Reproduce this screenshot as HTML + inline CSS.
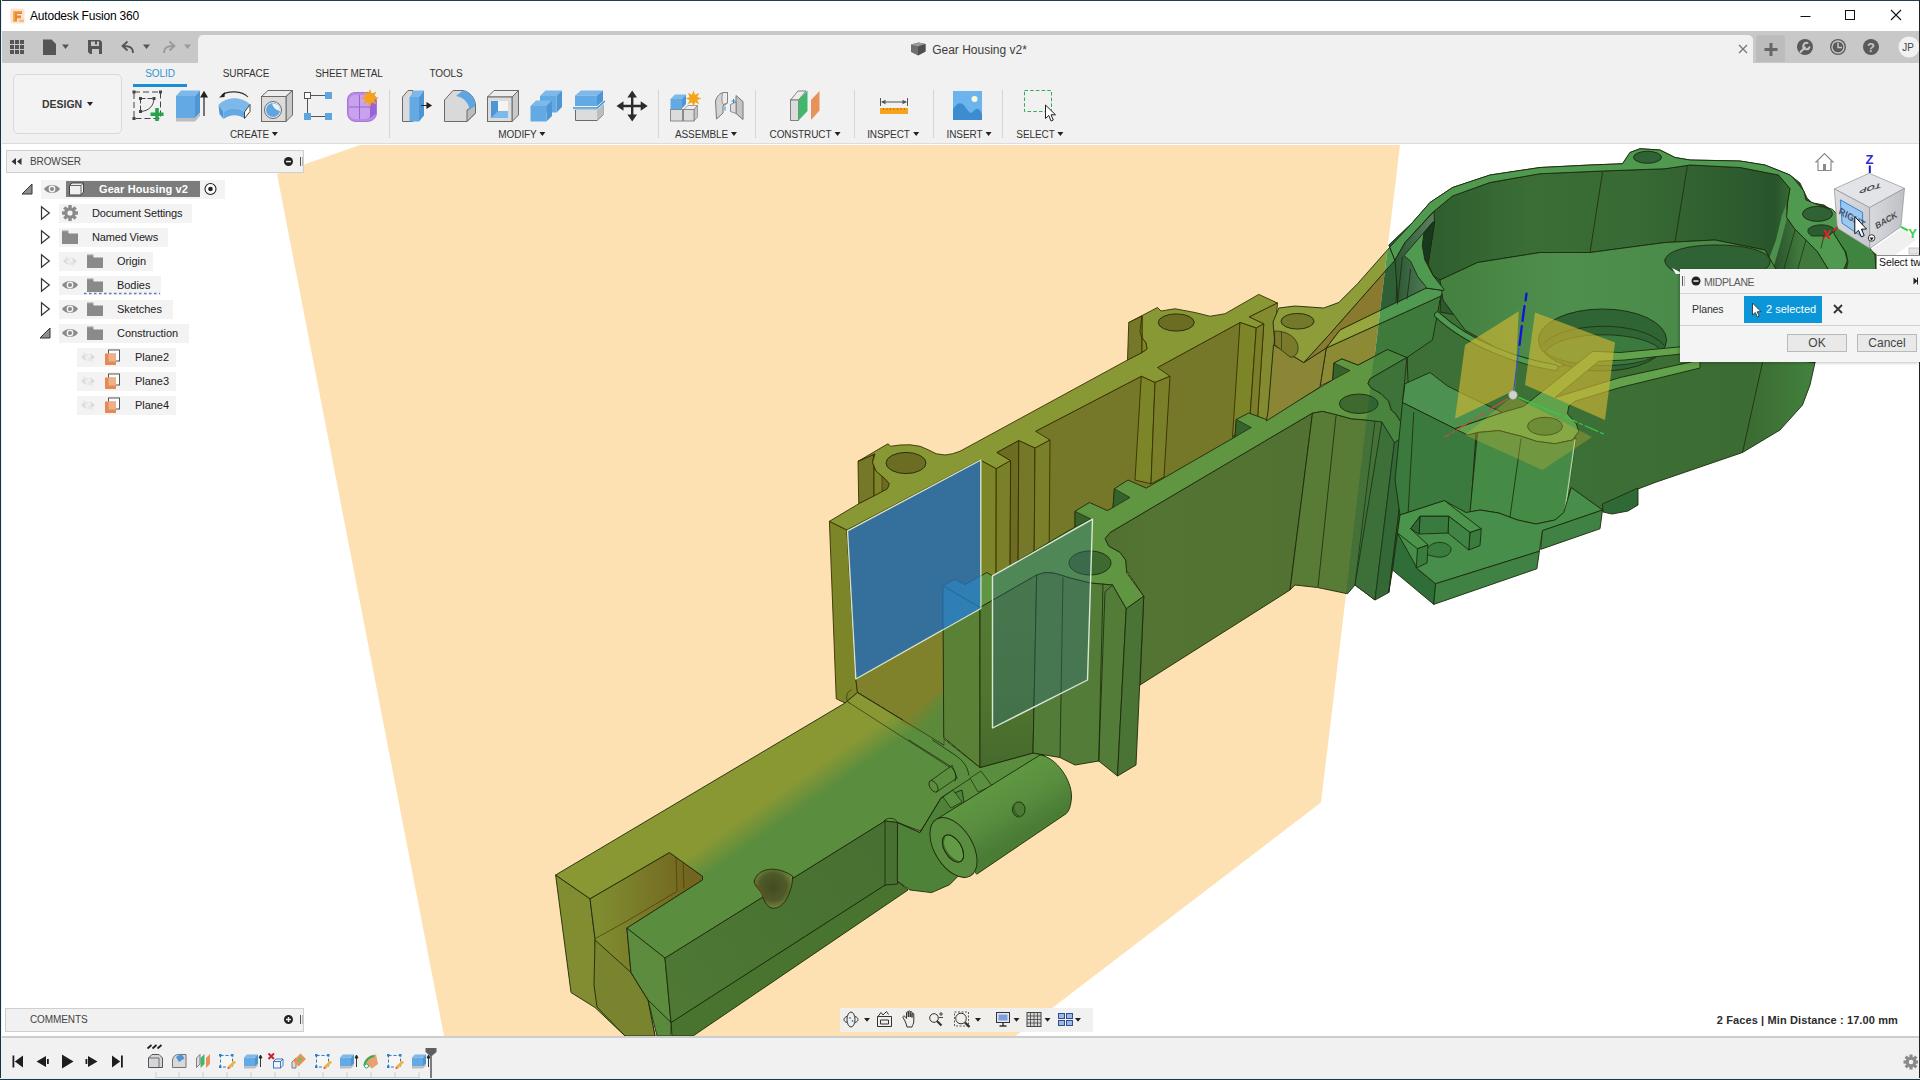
<!DOCTYPE html>
<html lang="en">
<head>
<meta charset="utf-8">
<title>Autodesk Fusion 360</title>
<style>
*{box-sizing:border-box;margin:0;padding:0}
html,body{width:1920px;height:1080px;overflow:hidden;background:#fff}
body{font-family:"Liberation Sans",sans-serif;font-size:11px;color:#333;position:relative}
.abs{position:absolute}
#app{position:absolute;left:0;top:0;width:1920px;height:1080px;overflow:hidden;background:#fff}
/* window frame */
#frameTop{left:0;top:0;width:1920px;height:1px;background:#1d3f4e}
#frameLeft{left:0;top:0;width:1px;height:1080px;background:#1b3340;box-shadow:1px 0 0 #e6f3f8}
#frameRight{left:1919px;top:0;width:1px;height:1080px;background:#222}
#frameBottom{left:0;top:1078.5px;width:1920px;height:1.5px;background:#1d3a46;box-shadow:0 -1px 0 #e3f1f6}
/* title bar */
#titlebar{left:2px;top:1px;width:1917px;height:30px;background:#fff}
#titlebar .t{left:28px;top:8px;font-size:12px;color:#000;white-space:nowrap;letter-spacing:-0.2px}
/* quick access bar */
#qat{left:2px;top:31px;width:1917px;height:31px;background:#c8c8c8}
#doctab{left:196px;top:4px;width:1555px;height:27px;background:#f1f1f1;border-radius:5px 5px 0 0}
#doctitle{left:4px;top:1px;width:1555px;height:27px;text-align:center;line-height:28px;font-size:12px;color:#3c3c3c}
#plusbtn{left:1754px;top:4px;width:29px;height:28px;background:#bcbcbc;border-radius:3px 3px 0 0}
/* toolbar */
#toolbar{left:2px;top:62px;width:1917px;height:82px;background:#f1f1f1;border-bottom:1px solid #dcdcdc}
#designbtn{left:11px;top:12px;width:109px;height:60px;border:1px solid #d9d9d9;border-radius:5px;background:#f3f3f3;text-align:center;line-height:58px;font-weight:bold;font-size:10.5px;color:#3a3a3a;letter-spacing:0}
.tab{top:6px;height:14px;font-size:10px;color:#333;white-space:nowrap;transform:translateX(-50%);letter-spacing:-0.1px}
.tab.on{color:#2d94d3}
#tabline{left:131px;top:22px;width:54px;height:3px;background:#1a8fd3}
.glabel{top:67px;font-size:10px;color:#333;white-space:nowrap;transform:translateX(-50%);letter-spacing:-0.1px}
.glabel:after{content:"";display:inline-block;margin-left:3px;border-left:3.5px solid transparent;border-right:3.5px solid transparent;border-top:4px solid #222;vertical-align:2px}
.sep{top:28px;width:1px;height:48px;background:#d6d6d6}
.ico{width:40px;height:40px}
/* viewport */
#viewport{left:2px;top:145px;width:1917px;height:891px;background:#fff;overflow:hidden}
#scene{position:absolute;left:-2px;top:-145px;width:1920px;height:1080px}
/* browser */
#browserHead{left:6px;top:150px;width:298px;height:23px;background:#f1f1f1;border:1px solid #cfcfcf}
.ptitle{left:23px;top:4px;font-size:11px;color:#444;letter-spacing:-0.1px}
.row{height:19px;background:#f3f3f3}
.rtxt{font-size:11px;color:#222;white-space:nowrap;line-height:14px;letter-spacing:-0.05px}
/* comments */
#commentsHead{left:5px;top:1008px;width:299px;height:24px;background:#f1f1f1;border:1px solid #cfcfcf}
/* nav bar */
#navbar{left:840px;top:1008px;width:253px;height:24px;background:rgba(240,240,240,.92)}
/* timeline */
#timeline{left:2px;top:1036px;width:1917px;height:42px;background:#f1f1f1;border-top:2px solid #cdcdcd}
/* midplane dialog */
#dlg{left:1680px;top:269px;width:240px;height:93px;z-index:5;background:#f4f4f4;box-shadow:-1px 1px 3px rgba(0,0,0,.25)}
#dlgHead{left:0;top:0;width:240px;height:25px;border-bottom:1px solid #d4d4d4}
#dlgSep{left:0;top:56px;width:240px;height:1px;background:#d0d0d0}
#selbtn{left:64px;top:27px;width:78px;height:26.5px;background:#0a96d8;color:#fff;font-size:11px;line-height:27px;white-space:nowrap}
.btn{top:65px;width:60px;height:18px;border:1px solid #b9b9b9;background:#e9e9e9;text-align:center;font-size:12px;line-height:16px;color:#444}
#tooltip{z-index:5;left:1876px;top:255px;width:50px;height:15px;background:#fff;border:1px solid #8a8a8a;font-size:10.5px;line-height:13px;color:#111;white-space:nowrap;padding-left:2px;overflow:hidden;letter-spacing:-0.1px}
#status{left:1600px;top:1013.5px;width:298px;font-size:11px;font-weight:bold;color:#2b2b2b;white-space:nowrap;letter-spacing:0.12px}
</style>
</head>
<body>
<div id="app">

<!-- ============ VIEWPORT ============ -->
<div id="viewport" class="abs">
<svg id="scene" width="1920" height="1080" viewBox="0 0 1920 1080">
<g id="p_plane">
<defs><clipPath id="cpIn"><polygon points="277,174 360,145 1400,145 1321,802.5 1015.5,1036 444,1036"/></clipPath><clipPath id="cpOut"><polygon points="1400,145 1920,145 1920,1036 1015.5,1036 1321,802.5"/></clipPath><linearGradient id="gFront" x1="0" y1="0" x2="1" y2="0"><stop offset="0" stop-color="#4f7031"/><stop offset="0.2" stop-color="#547433"/><stop offset="1" stop-color="#527233"/></linearGradient></defs>
<polygon points="277,174 360,145 1400,145 1321,802.5 1015.5,1036 444,1036" fill="#fde1b2"/>
</g>
<g id="p_backwall">
<polygon points="829.4,521.3 846.9,530 855.8,679 857.5,692.5 845,703 836.25,698.75" fill="#7d8529" stroke="#3a3000" stroke-width="0.9" stroke-linejoin="round"/>
<polygon points="846.9,530 980,460 980,620 943.75,640 943.75,745 857.5,692.5 855.8,679" fill="#80822b" stroke="#3a3000" stroke-width="0.9" stroke-linejoin="round"/>
<polygon points="980,459.4 1035.6,431.3 1141.3,376.3 1157.5,367.5 1240,322.5 1240,440 1200,470 1100,530 1000,585 980,600" fill="#747828" stroke="#3a3000" stroke-width="0.9" stroke-linejoin="round"/>
<polygon points="858,461.3 874,454.5 874,496 858.75,503.75" fill="#747828" stroke="#3a3000" stroke-width="0.9" stroke-linejoin="round"/>
<polygon points="874,454.5 872.5,462.5 876,471 885,478.75 889.4,483.75 887.5,488.75 874,496" fill="#7d8529" stroke="#3a3000" stroke-width="0.9" stroke-linejoin="round"/>
<polygon points="882,476 889.4,483.75 887.5,488.75 882,491.5" fill="#6c6c22" stroke="#3a3000" stroke-width="0.6" stroke-linejoin="round"/>
<polygon points="829.4,521.3 858.75,503.75 874,496 887.5,488.75 889.4,483.75 885,478.75 876,471 872.5,462.5 875,453.75 858,461.3 888,443.75 890.6,446.25 900,445 910,444.75 920,446.25 928.75,450 936.25,453.75 945,455 952.5,453.75 960,451.25 1127.5,360 1142,352.5 1147,349 1146,343 1141.5,337 1140,331 1142,325.5 1128.75,322.5 1157.5,307.5 1161,311 1175,308.75 1195,312.5 1210,316.25 1225,313.75 1258.75,294.4 1277.5,303 1249.4,316.9 1263.75,323.75 1256.25,328 1240,322.5 1157.5,367.5 1170,376.25 1155,382.5 1141.25,376.25 1035.6,431.25 1050,440 1035,448.1 1018.75,440.6 996.9,452.5 1010.6,460.6 996.25,468.75 980,460 846.9,530" fill="#879835" stroke="#3a3000" stroke-width="0.9" stroke-linejoin="round"/>
<polygon points="1128.75,322.5 1142,316 1142,352.5 1127.5,360" fill="#747828" stroke="#3a3000" stroke-width="0.9" stroke-linejoin="round"/>
<polygon points="1142,316 1140,331 1141.5,337 1146,343 1147,349 1142,352.5" fill="#7d8529" stroke="#3a3000" stroke-width="0.9" stroke-linejoin="round"/>
<ellipse cx="906" cy="463" rx="20" ry="10.6" fill="#6c6c22" stroke="#1d2a0c" stroke-width="0.9"/>
<path d="M887 466 C892 458 918 455 925.500 461" fill="none" stroke="#8a8f3a" stroke-width="0" stroke-linejoin="round" stroke-linecap="round"/>
<ellipse cx="1176.25" cy="322.5" rx="18" ry="8.6" fill="#6c6c22" stroke="#1d2a0c" stroke-width="0.9"/>
<polygon points="980,460 996.25,468.75 996,600 980.8,608" fill="#7d8529" stroke="#3a3000" stroke-width="0.9" stroke-linejoin="round"/>
<polygon points="996.25,468.75 1010.6,460.6 1010,590 996,600" fill="#7a8029" stroke="#3a3000" stroke-width="0.9" stroke-linejoin="round"/>
<polygon points="1010.6,460.6 996.9,452.5 1018.75,440.6 1018,585 1010,590" fill="#6c6c22" stroke="#3a3000" stroke-width="0.9" stroke-linejoin="round"/>
<polygon points="1018.75,440.6 1035,448.1 1034,575 1018,585" fill="#747828" stroke="#3a3000" stroke-width="0.9" stroke-linejoin="round"/>
<polygon points="1035,448.1 1050,440 1049,567 1034,575" fill="#7a8029" stroke="#3a3000" stroke-width="0.9" stroke-linejoin="round"/>
<polygon points="1141.25,376.25 1155,382.5 1151,483.75 1135,480" fill="#7d8529" stroke="#3a3000" stroke-width="0.9" stroke-linejoin="round"/>
<polygon points="1155,382.5 1170,376.25 1164,477 1151,483.75" fill="#7a8029" stroke="#3a3000" stroke-width="0.9" stroke-linejoin="round"/>
<polygon points="1249.4,316.9 1277.5,303 1267.5,423 1257.5,419 1263.75,323.75" fill="#838b30" stroke="#3a3000" stroke-width="0.9" stroke-linejoin="round"/>
<polygon points="1240,322.5 1256.25,328 1250,417 1232.5,437.5" fill="#7d8529" stroke="#3a3000" stroke-width="0.9" stroke-linejoin="round"/>
<polygon points="1256.25,328 1263.75,323.75 1257.5,419 1250,417" fill="#7a8029" stroke="#3a3000" stroke-width="0.9" stroke-linejoin="round"/>
</g>
<g id="p_arm">
<defs><linearGradient id="gFloor" gradientUnits="userSpaceOnUse" x1="811" y1="770" x2="826" y2="791.500"><stop offset="0" stop-color="#8a9834"/><stop offset="1" stop-color="#5b8d3e"/></linearGradient><linearGradient id="gPocket" gradientUnits="userSpaceOnUse" x1="600" y1="900" x2="690" y2="900"><stop offset="0" stop-color="#7f8c30"/><stop offset="1" stop-color="#73651f"/></linearGradient><linearGradient id="gArmFront" gradientUnits="userSpaceOnUse" x1="670" y1="1000" x2="885" y2="850"><stop offset="0" stop-color="#4e7834"/><stop offset="1" stop-color="#477032"/></linearGradient></defs>
<polygon points="671,1022.5 885,885 897,881 908,890 693,1036 672,1036" fill="#48742f" stroke="#1d2a0c" stroke-width="0.9" stroke-linejoin="round"/>
<path d="M605 1036 C602 1020 597 1010 595 1007" fill="none" stroke="#1d2a0c" stroke-width="0" stroke-linejoin="round" stroke-linecap="round"/>
<polygon points="555.6,875 590,898.75 595,938.75 627,930 631,972.5 648,1000 655,1036 625,1036 595,1007.5 571,992.5" fill="#828c31" stroke="#1d2a0c" stroke-width="0.9" stroke-linejoin="round"/>
<polygon points="590,898.75 669.4,852.5 702.5,876.25 702.5,880 626.9,928.1 631,972.5 597,990 595,938.75" fill="url(#gPocket)" stroke="#1d2a0c" stroke-width="0.9" stroke-linejoin="round"/>
<path d="M595 938.750 L627 921 L676 892 M676 855 L677 891 M683 859 L684 888" fill="none" stroke="#4a3a05" stroke-width="0.7" stroke-linejoin="round" stroke-linecap="round"/>
<polygon points="595,940 631,972.5 648,1000 655,1036 625,1036 597,1007 594,985" fill="#7a842e" stroke="#1d2a0c" stroke-width="0.9" stroke-linejoin="round"/>
<polygon points="631,972.5 648,1000 657,1036 671,1036 671,1022.5" fill="#5a8a3c" stroke="#1d2a0c" stroke-width="0.9" stroke-linejoin="round"/>
<polygon points="555.6,875 845,703 857.5,692.5 943.75,745 943.75,738.75 980,767.5 1033,753 1045,755 960,805 930,820 920,831 897.5,822.5 885,821 665,958.1 626.9,928.1 702.5,880 702.5,876.25 669.4,852.5 590,898.75" fill="url(#gFloor)" stroke="#1d2a0c" stroke-width="0.9" stroke-linejoin="round"/>
<defs><linearGradient id="gWallG" gradientUnits="userSpaceOnUse" x1="915" y1="708" x2="930" y2="722"><stop offset="0" stop-color="#80822b"/><stop offset="1" stop-color="#5b8a3a"/></linearGradient></defs>
<polygon points="900,722 943.75,690 943.75,745" fill="url(#gWallG)"/>
<path d="M857.500 692.500 L943.750 745 M848.750 702.500 L950 767.500" fill="none" stroke="#2a3410" stroke-width="0.7" stroke-linejoin="round" stroke-linecap="round"/>
<path d="M851 690 C846 692 845 700 849 703" fill="none" stroke="#2a3410" stroke-width="0.7" stroke-linejoin="round" stroke-linecap="round"/>
<polygon points="626.9,928.1 665,958.1 671,1022.5 648,1000 631,972.5" fill="#5d8c3e" stroke="#1d2a0c" stroke-width="0.9" stroke-linejoin="round"/>
<polygon points="665,958.1 885,821 897.5,822.5 897.5,884 885,885 671,1022.5" fill="url(#gArmFront)" stroke="#1d2a0c" stroke-width="0.9" stroke-linejoin="round"/>
<path d="M885 821 L885 885" fill="none" stroke="#1d2a0c" stroke-width="0.8" stroke-linejoin="round" stroke-linecap="round"/>
<defs><radialGradient id="gTear" gradientUnits="userSpaceOnUse" cx="773" cy="887" r="21"><stop offset="0" stop-color="#434b21"/><stop offset="0.65" stop-color="#4f5a28"/><stop offset="1" stop-color="#76843d"/></radialGradient></defs>
<path d="M754.400 881 C756 873 764 869.500 771 869.200 C778 869 786 871.500 792.500 876.100 C793 884 790 893 786 900 C782 906 777 908.500 773 908.300 C768 907.500 764.500 903 763 897 C762 892 758 889 756 886 C754.500 884 754 882.500 754.400 881 Z" fill="url(#gTear)" stroke="#1d2a0c" stroke-width="0.9" stroke-linejoin="round" stroke-linecap="round"/>
<path d="M755.500 884 C758 888 762.500 891 763.500 897" fill="none" stroke="#7a4a1a" stroke-width="1.3" stroke-linejoin="round" stroke-linecap="round"/>
<defs><linearGradient id="gCyl" gradientUnits="userSpaceOnUse" x1="985" y1="775" x2="1020" y2="835"><stop offset="0" stop-color="#74ab52"/><stop offset="0.12" stop-color="#609842"/><stop offset="0.6" stop-color="#588d3e"/><stop offset="1" stop-color="#4a7c36"/></linearGradient></defs>
<polygon points="897.5,822.5 920,832.5 941,798 962,790 975,870 958.7,875.6 949.6,884.7 931.6,892.6 910,890 897.3,881" fill="#4f8239" stroke="#1d2a0c" stroke-width="0.9" stroke-linejoin="round"/>
<path d="M897.500 822.500 L920 832.500 L941.250 797.500 L970 778.750" fill="none" stroke="#1d2a0c" stroke-width="0.8" stroke-linejoin="round" stroke-linecap="round"/>
<path d="M884 821 C886 817 896 817 897.500 822.500" fill="none" stroke="#1d2a0c" stroke-width="0.8" stroke-linejoin="round" stroke-linecap="round"/>
<path d="M908.750 740 L950 766 C955 770 957 775 955 781 M932.500 740 L955 755 C964 761 968 768 968.750 775" fill="none" stroke="#1d2a0c" stroke-width="0.8" stroke-linejoin="round" stroke-linecap="round"/>
<path d="M931 780.500 L952 765.500 M936.500 792 L957 778 M957 778 C955 772 953 768 952 765.500" fill="none" stroke="#1d2a0c" stroke-width="0.8" stroke-linejoin="round" stroke-linecap="round"/>
<ellipse cx="933.5" cy="786.3" rx="3.6" ry="6.4" fill="none" stroke="#1d2a0c" stroke-width="0.8" transform="rotate(-32 933.5 786.3)"/>
<polygon points="943,797 953,790 962,802 951,808" fill="#5a8f40" stroke="#1d2a0c" stroke-width="0.7" stroke-linejoin="round"/>
<polygon points="970,778 981,771 992,786 978,792" fill="#5a8f40" stroke="#1d2a0c" stroke-width="0.7" stroke-linejoin="round"/>
<path d="M937.500 818.750 L1040 755 C1056 757 1072 780 1071.500 797 C1071 806 1069 811 1066 813.750 L977 874 Z" fill="url(#gCyl)" stroke="#1d2a0c" stroke-width="0.9" stroke-linejoin="round" stroke-linecap="round"/>
<ellipse cx="953.5" cy="847.5" rx="33" ry="19" fill="#5a8d3f" stroke="#1d2a0c" stroke-width="0.9" transform="rotate(59 953.5 847.5)"/>
<ellipse cx="953" cy="848.5" rx="15" ry="8.5" fill="#629a46" stroke="#1d2a0c" stroke-width="0.9" transform="rotate(59 953 848.5)"/>
<path d="M944 838 C940 845 948 858 958 862" fill="none" stroke="#3f6a2f" stroke-width="2.2" stroke-linejoin="round" stroke-linecap="round"/>
<ellipse cx="953" cy="848.5" rx="15" ry="8.5" fill="none" stroke="#1d2a0c" stroke-width="0.9" transform="rotate(59 953 848.5)"/>
<ellipse cx="1018.75" cy="809.4" rx="6.3" ry="7.5" fill="#4a7a35" stroke="#1d2a0c" stroke-width="0.9"/>
<path d="M1014 806 C1013 811 1016 815 1020 816.500" fill="none" stroke="#355e2a" stroke-width="1.6" stroke-linejoin="round" stroke-linecap="round"/>
</g>
<g id="p_front">
<polygon points="1110,532.5 1312.5,413 1290,590 1140,685 1143.75,596.25 1126,570 1125.6,560 1120,552.5 1108.75,546.25 1105,538.75" fill="url(#gFront)" stroke="#1d2a0c" stroke-width="0.9" stroke-linejoin="round"/>
<polygon points="1312.5,413 1322.5,411.25 1337.5,415 1351.25,418.75 1366.25,420 1381.9,421.9 1375,600 1355,585 1347.5,593.75 1317.5,587.5 1295,585 1290,590" fill="#587c36" stroke="#1d2a0c" stroke-width="0.9" stroke-linejoin="round"/>
<path d="M1336 416 L1318 587 M1375 421 L1355 585" fill="none" stroke="#1d2a0c" stroke-width="0.8" stroke-linejoin="round" stroke-linecap="round"/>
<polygon points="1381.9,421.9 1394.4,442.5 1375,600 1355,585" fill="#4f7a38" stroke="#1d2a0c" stroke-width="0.9" stroke-linejoin="round"/>
<polygon points="1394.4,442.5 1408.75,433.75 1388.75,592.5 1375,600" fill="#456f35" stroke="#1d2a0c" stroke-width="0.9" stroke-linejoin="round"/>
<polygon points="943.3,587.5 953.3,580.8 965,585 986.7,572.5 992.5,575.8 1075,527 1075,511.25 1089.4,502.5 1107.5,510.6 1113,507.5 1114.4,488.75 1128,480 1146.25,488.1 1235,437 1236.25,419.4 1248.75,413 1266.25,419.4 1332.5,380 1333.75,363 1341.9,358.75 1358,365 1387.5,349.4 1406.9,357.5 1370,378.75 1368,383.75 1371.25,388 1381.25,393.75 1388.75,401.25 1391.25,410 1395,413 1408.75,433.75 1394.4,442.5 1381.9,421.9 1366.25,420 1351.25,418.75 1337.5,415 1322.5,411.25 1312.5,413 1110,532.5 1105,538.75 1108.75,546.25 1120,552.5 1125.6,560 1126.7,573 1143.75,596.25 1126.25,608.75 1112.5,585 1090,583 1070,578 1055,573.3 1045,572.5 1036.7,575 980,607.5" fill="#609641" stroke="#1d2a0c" stroke-width="0.9" stroke-linejoin="round"/>
<polygon points="1075,511.25 1091,519 1075,527" fill="#36622c" stroke="#1d2a0c" stroke-width="0.7" stroke-linejoin="round"/>
<polygon points="1114.4,488.75 1130,497.5 1113,507.5" fill="#36622c" stroke="#1d2a0c" stroke-width="0.7" stroke-linejoin="round"/>
<polygon points="1236.25,419.4 1251.25,427.5 1235,437" fill="#36622c" stroke="#1d2a0c" stroke-width="0.7" stroke-linejoin="round"/>
<polygon points="1333.75,363 1350,370.6 1332.5,380" fill="#36622c" stroke="#1d2a0c" stroke-width="0.7" stroke-linejoin="round"/>
<ellipse cx="1090" cy="563" rx="21" ry="12" fill="#3f6a2f" stroke="#1d2a0c" stroke-width="0.9"/>
<ellipse cx="1358.75" cy="403.75" rx="19.4" ry="9.7" fill="#3f6a2f" stroke="#1d2a0c" stroke-width="0.9"/>
<polygon points="942.9,585.8 980,607.5 980,767.5 943.75,737.5" fill="#5a8236" stroke="#1d2a0c" stroke-width="0.9" stroke-linejoin="round"/>
<defs><linearGradient id="gFaceB" x1="0" y1="0" x2="0" y2="1"><stop offset="0" stop-color="#557c36"/><stop offset="0.6" stop-color="#50762f"/><stop offset="1" stop-color="#466a2d"/></linearGradient></defs>
<polygon points="980,607.5 1036.7,575 1033,753 980,767.5" fill="url(#gFaceB)" stroke="#1d2a0c" stroke-width="0.9" stroke-linejoin="round"/>
<polygon points="1036.7,575 1045,572.5 1055,573.3 1070,578 1090,583 1112.5,585 1126.25,608.75 1117.5,776 1098.75,761 1075,765 1060,757.5 1045,755 1033,753" fill="#527c38" stroke="#1d2a0c" stroke-width="0.9" stroke-linejoin="round"/>
<path d="M1063 578 L1060 757 M1103 584.500 L1098.750 761" fill="none" stroke="#1d2a0c" stroke-width="0.8" stroke-linejoin="round" stroke-linecap="round"/>
<polygon points="1126.25,608.75 1143.75,596.25 1136,765 1117.5,776" fill="#4a7435" stroke="#1d2a0c" stroke-width="0.9" stroke-linejoin="round"/>
<path d="M1112.500 585 L1105 592 L1098.750 761" fill="none" stroke="#1d2a0c" stroke-width="0.8" stroke-linejoin="round" stroke-linecap="round"/>
<polygon points="1374,356.5 1387.5,349.4 1406.9,357.5 1408.75,433.75 1388.75,592.5 1375,600 1355,585 1347.5,593.75 1346,594" fill="rgba(15,85,60,0.28)"/>
</g>
<g id="p_housing">
<defs><linearGradient id="gInner" gradientUnits="userSpaceOnUse" x1="1440" y1="0" x2="1800" y2="0"><stop offset="0" stop-color="#2f5f2f"/><stop offset="0.25" stop-color="#3a6e36"/><stop offset="0.55" stop-color="#376a34"/><stop offset="0.85" stop-color="#2c5a2e"/><stop offset="0.93" stop-color="#28542b"/><stop offset="1" stop-color="#3f7a3c"/></linearGradient><linearGradient id="gExt" gradientUnits="userSpaceOnUse" x1="1560" y1="0" x2="1815" y2="0"><stop offset="0" stop-color="#3d7036"/><stop offset="0.75" stop-color="#3b6c33"/><stop offset="1" stop-color="#43823e"/></linearGradient><linearGradient id="gFloorH" gradientUnits="userSpaceOnUse" x1="1440" y1="0" x2="1760" y2="0"><stop offset="0" stop-color="#44803f"/><stop offset="0.4" stop-color="#4f8f4d"/><stop offset="1" stop-color="#488848"/></linearGradient></defs>
<polygon points="1326.25,348 1441,296 1437.5,317.5 1432.5,365 1406.9,357.5 1387.5,349.4 1358,365 1341.9,358.75 1333.75,363 1332.5,380 1320,386" fill="#8c8a34" clip-path="url(#cpIn)"/>
<polygon points="1326.25,348 1441,296 1437.5,317.5 1432.5,365 1406.9,357.5 1387.5,349.4 1358,365 1341.9,358.75 1333.75,363 1332.5,380 1320,386" fill="#3d7a3c" clip-path="url(#cpOut)"/>
<polygon points="1326.25,348 1441,296 1437.5,317.5 1432.5,365 1406.9,357.5 1387.5,349.4 1358,365 1341.9,358.75 1333.75,363 1332.5,380 1320,386" fill="none" stroke="#1d2a0c" stroke-width="0.9" stroke-linejoin="round"/>
<polygon points="1273.5,345 1303.75,362.5 1326.25,348 1320,387 1266.25,421 1268,412" fill="#8a8636" stroke="#1d2a0c" stroke-width="0.9" stroke-linejoin="round"/>
<polygon points="1303.75,362.5 1330,333.75 1395,260 1403,256 1398,302 1340,330 1326.25,348" fill="#8a7a30" clip-path="url(#cpIn)"/>
<polygon points="1303.75,362.5 1330,333.75 1395,260 1403,256 1398,302 1340,330 1326.25,348" fill="#2f5f35" clip-path="url(#cpOut)"/>
<polygon points="1303.75,362.5 1330,333.75 1395,260 1403,256 1398,302 1340,330 1326.25,348" fill="none" stroke="#1d2a0c" stroke-width="0.9" stroke-linejoin="round"/>
<path d="M1398 257 L1396 303 M1408 258 L1405 298" fill="none" stroke="#1d2a0c" stroke-width="0.8" stroke-linejoin="round" stroke-linecap="round"/>
<polygon points="1278.75,308 1295,306 1323.75,308 1338.75,302.5 1357.5,283.75 1390,247 1412.5,222.5 1420,230 1395,260 1330,333.75 1303.75,362.5 1275,345 1273,322" fill="#8e9c3a" clip-path="url(#cpIn)"/>
<polygon points="1278.75,308 1295,306 1323.75,308 1338.75,302.5 1357.5,283.75 1390,247 1412.5,222.5 1420,230 1395,260 1330,333.75 1303.75,362.5 1275,345 1273,322" fill="#4f9a50" clip-path="url(#cpOut)"/>
<polygon points="1278.75,308 1295,306 1323.75,308 1338.75,302.5 1357.5,283.75 1390,247 1412.5,222.5 1420,230 1395,260 1330,333.75 1303.75,362.5 1275,345 1273,322" fill="none" stroke="#1d2a0c" stroke-width="0.9" stroke-linejoin="round"/>
<ellipse cx="1297.5" cy="321.25" rx="16.5" ry="7.8" fill="#73782a" stroke="#1d2a0c" stroke-width="0.9"/>
<path d="M1275 331 C1290 331 1299 340 1298 350 C1297 356 1292 358 1290 357 L1275 345 Z" fill="#7b7a2c" stroke="#1d2a0c" stroke-width="0.7" stroke-linejoin="round" stroke-linecap="round"/>
<path d="M1281.500 332 L1281.500 349" fill="none" stroke="#1d2a0c" stroke-width="0.6" stroke-linejoin="round" stroke-linecap="round"/>
<polygon points="1340,330 1426,288 1443.75,290.5 1441,296 1326.25,348" fill="#98a640" clip-path="url(#cpIn)"/>
<polygon points="1340,330 1426,288 1443.75,290.5 1441,296 1326.25,348" fill="#4f9a50" clip-path="url(#cpOut)"/>
<polygon points="1340,330 1426,288 1443.75,290.5 1441,296 1326.25,348" fill="none" stroke="#1d2a0c" stroke-width="0.9" stroke-linejoin="round"/>
<polygon points="1406.9,357.5 1432.5,340 1440,300 1560,330 1700,340 1815,362.5 1810,385 1802.5,405 1780,430 1742.5,452.5 1655,482.5 1638,489 1605,505 1602.5,510 1571,488 1560,520 1400,515 1392.5,570 1388.75,592.5 1408.75,433.75" fill="url(#gExt)" stroke="#1d2a0c" stroke-width="0.9" stroke-linejoin="round"/>
<path d="M1762.500 362.500 L1742.500 452.500" fill="none" stroke="#1d2a0c" stroke-width="0.8" stroke-linejoin="round" stroke-linecap="round"/>
<polygon points="1406.9,357.5 1370,378.75 1368,383.75 1371.25,388 1381.25,393.75 1388.75,401.25 1391.25,410 1395,413 1408.75,433.75 1409,400" fill="#3d7239" stroke="#1d2a0c" stroke-width="0.9" stroke-linejoin="round"/>
<path d="M1406.900 357.500 L1402.500 402.500" fill="none" stroke="#1d2a0c" stroke-width="0.8" stroke-linejoin="round" stroke-linecap="round"/>
<polygon points="1395,260 1388.75,245 1412.5,222.5 1430,202.5 1452.5,187.5 1490,175 1540,167.5 1590,165 1622.5,163.75 1630,152.5 1640,148.75 1660,150 1675,157.5 1690,160 1740,161 1765,165 1790,175 1800,183 1807,198 1812,202.8 1824,205 1835,212.4 1837.3,222 1877,255 1880,272 1815,272 1815,362.5 1700,345 1560,335 1440,312 1441,296 1443.75,291" fill="#2c5a2e" stroke="#1d2a0c" stroke-width="0.9" stroke-linejoin="round"/>
<polygon points="1432.5,212.5 1452.5,196 1490,182.5 1540,173.75 1602.5,171 1665,168.75 1690,165 1740,167.5 1778.5,175 1790,188.6 1787.7,202.4 1786.6,217.3 1794.6,228.75 1806,240 1817.5,251.7 1830,272 1777.5,272 1765,250 1715,240 1665,242.5 1590,252.5 1540,252.5 1477.5,262.5 1440,280 1433,275.4 1428,264 1434.5,222" fill="url(#gInner)" stroke="#1d2a0c" stroke-width="0.9" stroke-linejoin="round"/>
<path d="M1602.500 172.500 L1590 252.500 M1687.500 165 L1675 242.500" fill="none" stroke="#1d2a0c" stroke-width="0.8" stroke-linejoin="round" stroke-linecap="round"/>
<polygon points="1786,205 1787,218 1780,245 1772,272 1764,272 1776,240 1782,215" fill="#4f8f4e"/>
<path d="M1795 230 L1783 272 M1806 240 L1797 272" fill="none" stroke="#1d2a0c" stroke-width="0.7" stroke-linejoin="round" stroke-linecap="round"/>
<polygon points="1838.7,224 1870,248 1875,255 1876,272 1842.7,272 1847.3,260.8 1845,251.7 1833.5,233" fill="#3f8540" stroke="#1d2a0c" stroke-width="0.9" stroke-linejoin="round"/>
<polygon points="1835,236 1846,252 1848,262 1846,272 1838,272 1840,258 1832,240" fill="#28552c" stroke="#1d2a0c" stroke-width="0.7" stroke-linejoin="round"/>
<path d="M1390 247 L1412.500 222.500 L1430 202.500 L1452.500 187.500 L1490 175 L1540 167.500 L1590 165 L1622.500 163.750 L1630 152.500 L1640 148.750 L1660 150 L1675 157.500 L1690 160 L1740 161 L1765 165 L1790 175 L1794.600 179.500 L1803.750 191 L1806 200 L1817.500 204.700 L1832.400 209.300 L1838 215 L1838.700 224 L1833.500 233 L1845 251.700 L1847.300 260.800 L1842.700 272 L1830 272 L1817.500 251.700 L1806 240 L1794.600 228.750 L1786.600 217.300 L1787.700 202.400 L1790 188.600 L1778.500 175 L1740 167.500 L1690 165 L1665 168.750 L1602.500 171 L1540 173.750 L1490 182.500 L1452.500 196 L1432.500 212.500 L1405 242.500 L1395 260 Z" fill="#4f9a50" stroke="#1d2a0c" stroke-width="0.9" stroke-linejoin="round" stroke-linecap="round"/>
<ellipse cx="1647.5" cy="157.3" rx="14" ry="6" fill="#2f6234" stroke="#1d2a0c" stroke-width="0.9"/>
<ellipse cx="1817.5" cy="213.9" rx="15" ry="7.5" fill="#2f6234" stroke="#1d2a0c" stroke-width="0.9"/>
<path d="M1808.500 229 C1812 224 1828 223 1833.500 228.500 C1834 232 1831 234.500 1828 236 L1812 236 C1808 234 1807 231 1808.500 229 Z" fill="#2c5d30" stroke="#1d2a0c" stroke-width="0.8" stroke-linejoin="round" stroke-linecap="round"/>
<path d="M1824 236 L1821 248" fill="none" stroke="#1d2a0c" stroke-width="0.7" stroke-linejoin="round" stroke-linecap="round"/>
<polygon points="1440,280 1477.5,262.5 1540,252.5 1590,252.5 1665,242.5 1715,240 1765,250 1777.5,272 1815,300 1815,362.5 1700,352 1620,352 1555,367.5 1500,350 1465,330 1443,300" fill="url(#gFloorH)" stroke="#1d2a0c" stroke-width="0.9" stroke-linejoin="round"/>
<path d="M1665 260 C1667 250 1690 245 1717 245 C1745 245 1768 251 1770 260 C1771 266 1765 271 1755 274 L1680 274 C1670 270 1664 265 1665 260 Z" fill="#2f6234" stroke="#1d2a0c" stroke-width="0.9" stroke-linejoin="round" stroke-linecap="round"/>
<path d="M1672 268 L1684 274 L1676 274 Z" fill="#fff"/>
<ellipse cx="1602.5" cy="340" rx="64" ry="31" fill="#2f6535" stroke="#1d2a0c" stroke-width="0.9"/>
<path d="M1542 345 C1560 322 1640 318 1664 345 M1552 352 C1572 334 1632 332 1652 354" fill="none" stroke="#1d2a0c" stroke-width="0.8" stroke-linejoin="round" stroke-linecap="round"/>
<path d="M1545 352 C1560 368 1640 372 1662 352 C1650 330 1560 328 1545 352 Z" fill="#3b7a3f" stroke="#1d2a0c" stroke-width="0.8" stroke-linejoin="round" stroke-linecap="round"/>
<defs><linearGradient id="gPock" gradientUnits="userSpaceOnUse" x1="1398" y1="0" x2="1428" y2="0"><stop offset="0" stop-color="#2f5a36"/><stop offset="0.5" stop-color="#3f6b48"/><stop offset="1" stop-color="#567a5c"/></linearGradient></defs>
<polygon points="1395,260 1405,242.5 1434,211.5 1434.5,222 1428,264 1433,275.4 1443.75,290 1426,288 1398,302" fill="url(#gPock)" stroke="#1d2a0c" stroke-width="0.9" stroke-linejoin="round"/>
<path d="M1402.400 257 L1397.300 304 M1410.600 269.300 L1407 298.900" fill="none" stroke="#1d2a0c" stroke-width="0.8" stroke-linejoin="round" stroke-linecap="round"/>
<polygon points="1433,221.9 1423.8,233.6 1422.3,245.9 1424.9,260.1 1428,264 1434.5,222" fill="#173a1f" stroke="#1d2a0c" stroke-width="0.7" stroke-linejoin="round"/>
<polygon points="1433,221.9 1404,255.6 1410.6,261.2 1417.7,276.5 1425.9,286.6 1426,288 1443.75,290.5 1444.2,289.7 1433,275.4 1424.9,260.1 1422.3,245.9 1423.8,233.6" fill="#4f9a50" stroke="#1d2a0c" stroke-width="0.9" stroke-linejoin="round"/>
<path d="M1437.500 315 C1470 345 1520 362 1555 367.500" fill="none" stroke="#16300f" stroke-width="6.6" stroke-linejoin="round" stroke-linecap="round"/>
<path d="M1437.500 315 C1470 345 1520 362 1555 367.500" fill="none" stroke="#4f9a50" stroke-width="5" stroke-linejoin="round" stroke-linecap="round"/>
<polygon points="1405,383.75 1430,372.5 1447.5,386 1467.5,396 1502.5,412.5 1455,428.75 1402.5,402.5" fill="#4c9150" stroke="#1d2a0c" stroke-width="0.9" stroke-linejoin="round"/>
<polygon points="1402.5,402.5 1455,428.75 1476,433.75 1470,520 1400,515 1395,480" fill="#3b7a3e" stroke="#1d2a0c" stroke-width="0.9" stroke-linejoin="round"/>
<path d="M1413.750 412.500 L1408 515" fill="none" stroke="#1d2a0c" stroke-width="0.8" stroke-linejoin="round" stroke-linecap="round"/>
<polygon points="1455,428.75 1502.5,412.5 1523.75,406.25 1592.5,351.25 1620,352.5 1700,345 1700,352 1625,360 1598.75,361.25 1555,397.5 1620,377.5 1700,360 1700,368 1620,387.5 1575,401.25 1568.75,406.25 1567.5,413.75 1576.25,423.75 1578.75,431.25 1572.5,440 1555,443.75 1536.25,441.25 1521.25,436.25 1498.75,430.6 1477.5,432.5 1467.5,435" fill="#62a24d" stroke="#1d2a0c" stroke-width="0.9" stroke-linejoin="round"/>
<ellipse cx="1545" cy="426.25" rx="17.5" ry="9" fill="#3f7a38" stroke="#1d2a0c" stroke-width="0.9"/>
<polygon points="1477.5,432.5 1498.75,430.6 1521.25,436.25 1536.25,441.25 1555,443.75 1572.5,440 1576,437.5 1565,512 1555,520 1536,524 1517.5,520 1498.75,513 1480,510 1470,512" fill="#458a45" stroke="#1d2a0c" stroke-width="0.9" stroke-linejoin="round"/>
<path d="M1521 438.750 L1510 517" fill="none" stroke="#1d2a0c" stroke-width="0.8" stroke-linejoin="round" stroke-linecap="round"/>
<path d="M1575 440 L1565 510" fill="none" stroke="#a9d39a" stroke-width="1.4" stroke-linejoin="round" stroke-linecap="round"/>
<polygon points="1392.5,570 1397.5,533 1417.5,548.75 1416.25,568 1435.6,583.75 1433.75,604.4" fill="#2f6e38" stroke="#1d2a0c" stroke-width="0.9" stroke-linejoin="round"/>
<polygon points="1417.5,568.75 1435.6,583.75 1539.4,551.25 1542.5,530.6 1602.5,510 1571.25,487.5 1563.75,512.5 1555,520 1536,524 1517.5,520 1498.75,513 1480,510 1466,512.5 1444.4,500.6 1400,515 1397.5,533" fill="#468e49" stroke="#1d2a0c" stroke-width="0.9" stroke-linejoin="round"/>
<polygon points="1435.6,583.75 1539.4,551.25 1536.9,568.75 1433.75,604.4" fill="#3f8243" stroke="#1d2a0c" stroke-width="0.9" stroke-linejoin="round"/>
<polygon points="1542.5,530.6 1602.5,510 1600,528.75 1540.6,549.4" fill="#3f8243" stroke="#1d2a0c" stroke-width="0.9" stroke-linejoin="round"/>
<polygon points="1397.5,533 1400,515 1444.4,500.6 1481.25,528.75 1470,532.5 1448.75,516.25 1420,516.25 1410.6,528.75 1428,545 1417.5,548.75" fill="#4a944c" stroke="#1d2a0c" stroke-width="0.9" stroke-linejoin="round"/>
<polygon points="1481.25,528.75 1480,545.6 1468.75,550 1470,532.5" fill="#3a7c40" stroke="#1d2a0c" stroke-width="0.9" stroke-linejoin="round"/>
<polygon points="1470,532.5 1448.75,516.25 1448,533 1468.75,550" fill="#3f8444" stroke="#1d2a0c" stroke-width="0.9" stroke-linejoin="round"/>
<polygon points="1420,516.25 1448.75,516.25 1448,533 1419,534" fill="#397a3e" stroke="#1d2a0c" stroke-width="0.9" stroke-linejoin="round"/>
<polygon points="1410.6,528.75 1420,516.25 1419,534" fill="#2f6a36" stroke="#1d2a0c" stroke-width="0.9" stroke-linejoin="round"/>
<polygon points="1417.5,548.75 1428,545 1427,563 1416.25,568" fill="#3a7c40" stroke="#1d2a0c" stroke-width="0.9" stroke-linejoin="round"/>
<path d="M1428 548 C1432 541 1446 540 1451 548 C1452 554 1445 558 1437 557 L1428 555" fill="#3a7c40" stroke="#1d2a0c" stroke-width="0.8" stroke-linejoin="round" stroke-linecap="round"/>
<polygon points="1602.5,504 1638,488 1638,505 1628,511 1612,514 1603,512" fill="#2f6a36" stroke="#1d2a0c" stroke-width="0.9" stroke-linejoin="round"/>
</g>
<g id="p_overlays">
<polygon points="847.5,530.8 980.8,460 980.8,608.3 855.8,679" fill="#356f9c" stroke="#d6e2c8" stroke-width="1.4" stroke-linejoin="round"/>
<polygon points="942.9,585.8 954.6,579.2 965,584.6 980.2,576 980.2,608 943.3,629" fill="#2f7fb4"/>
<path d="M942.900 629 L942.900 585.800 L954.600 579.200 L965 584.600 L980 576 M942.900 585.800 L980 607.500" fill="none" stroke="#1f5f96" stroke-width="0.8" stroke-linejoin="round" stroke-linecap="round"/>
<polygon points="992.5,575.8 1092.5,519.2 1087.5,680 992.5,728" fill="rgba(50,110,125,0.36)" stroke="#d9e6d6" stroke-width="1.4" stroke-linejoin="round"/>
<polygon points="1465,345 1518.75,311.25 1515,390 1455,418.75" fill="rgba(214,186,52,0.62)"/>
<polygon points="1535,312.5 1615,342.5 1605,420 1525,385" fill="rgba(214,186,52,0.62)"/>
<polygon points="1465,435 1513,396 1592,437 1542.5,470" fill="rgba(214,186,52,0.30)"/>
<path d="M1526.500 293.500 L1525.600 300.500 M1524.500 306 L1522.500 321 M1521.800 326 L1519.500 345" fill="none" stroke="#1010e0" stroke-width="2.2" stroke-linejoin="round" stroke-linecap="round"/>
<path d="M1519 348 L1513.500 392" fill="none" stroke="#3458c8" stroke-width="1.2" stroke-linejoin="round" stroke-linecap="round"/>
<path d="M1507.500 398.750 L1489 410" fill="none" stroke="#c8503c" stroke-width="1.4" stroke-linejoin="round" stroke-linecap="round"/>
<path d="M1485 412.500 L1445 437" fill="none" stroke="#c8503c" stroke-width="1.2" stroke-linejoin="round" stroke-linecap="round" stroke-dasharray="12 3 3 3"/>
<path d="M1518.750 397.500 L1560 415" fill="none" stroke="#3bc44a" stroke-width="1.4" stroke-linejoin="round" stroke-linecap="round"/>
<path d="M1564 416.500 L1606 435" fill="none" stroke="#3bc44a" stroke-width="1.2" stroke-linejoin="round" stroke-linecap="round" stroke-dasharray="14 3 3 3"/>
<circle cx="1513" cy="395" r="4.200" fill="#cfd3cf" stroke="#aab0aa" stroke-width="0.8"/>
</g>
</svg>

</div>

<!-- ============ TITLE BAR ============ -->
<div id="titlebar" class="abs">
<svg class="abs" style="left:8px;top:7px" width="17" height="17" viewBox="0 0 17 17">
  <rect x="0.5" y="0.5" width="14" height="15" rx="1.5" fill="#fbe3cc"/>
  <path d="M3.5 3 H12 V6 H7 V7.5 H11 V10.3 H7 V13.5 H3.5 Z" fill="#e8872d"/>
  <path d="M3.5 3 H12 L10.5 4.5 H5 V13.5 H3.5 Z" fill="#f4a552"/>
  <path d="M9 11.5 h5 v2.5 h-5 z" fill="#f2b27a" opacity=".8"/>
</svg>
<div class="abs t">Autodesk Fusion 360</div>
<svg class="abs" style="left:1790px;top:4px" width="126" height="22" viewBox="0 0 126 22">
  <path d="M8.5 11.5 H18.5" stroke="#111" stroke-width="1"/>
  <rect x="53.5" y="5.5" width="9" height="9" fill="none" stroke="#111" stroke-width="1"/>
  <path d="M99 5 L109 15 M109 5 L99 15" stroke="#111" stroke-width="1.1"/>
</svg>

</div>

<!-- ============ QUICK ACCESS ============ -->
<div id="qat" class="abs">
<div id="doctab" class="abs">
  <div id="doctitle" class="abs">Gear Housing v2*</div>
  <svg class="abs" style="left:711px;top:5px" width="18" height="18" viewBox="0 0 18 18">
    <path d="M2 4.5 L9.5 2.5 L16.5 4 L16.5 11.5 L9 15.5 L2 12 Z" fill="#6f6f6f"/>
    <path d="M2 4.5 L9 6.5 L16.5 4 L9.5 2.5 Z" fill="#9a9a9a"/>
    <path d="M9 6.5 L16.5 4 L16.5 11.5 L9 15.5 Z" fill="#4f4f4f"/>
  </svg>
  <svg class="abs" style="left:1539px;top:8px" width="12" height="12" viewBox="0 0 12 12"><path d="M2 2 L10 10 M10 2 L2 10" stroke="#777" stroke-width="1.3"/></svg>
</div>
<div id="plusbtn" class="abs"><svg width="29" height="27" viewBox="0 0 29 27"><path d="M8.500 14.500 H21.500 M15 8 V21" stroke="#666" stroke-width="3"/></svg></div>
<!-- left quick access icons -->
<svg class="abs" style="left:0;top:0" width="200" height="31" viewBox="2 31 200 31">
  <g fill="#555">
    <rect x="10" y="40" width="4" height="4"/><rect x="15" y="40" width="4" height="4"/><rect x="20" y="40" width="4" height="4"/>
    <rect x="10" y="45" width="4" height="4"/><rect x="15" y="45" width="4" height="4"/><rect x="20" y="45" width="4" height="4"/>
    <rect x="10" y="50" width="4" height="4"/><rect x="15" y="50" width="4" height="4"/><rect x="20" y="50" width="4" height="4"/>
    <path d="M43 39.5 H51.5 L56 44 V55 H43 Z"/>
    <path d="M62 44.5 h7 l-3.5 4.5 z"/>
    <path d="M88 40 H100 L102 42 V54 H90 L88 52 Z M91 41.5 V46 H99 V41.5 H97 V44.5 H95 V41.5 Z M92 49 V54 H99 V49 Z" fill-rule="evenodd"/>
    <path d="M143 44.5 h7 l-3.5 4.5 z"/>
  </g>
  <path d="M133 53 C133 47.500 130 46 123.500 46 M127.500 41.500 L122.500 46 L127.500 50.500" fill="none" stroke="#555" stroke-width="1.8"/>
  <path d="M164 53 C164 47.500 167 46 173.500 46 M169.500 41.500 L174.500 46 L169.500 50.500" fill="none" stroke="#9a9a9a" stroke-width="1.8"/>
  <path d="M184 44.500 h7 l-3.500 4.500 z" fill="#9a9a9a"/>
</svg>
<!-- right icons -->
<svg class="abs" style="left:1788px;top:2px" width="130" height="29" viewBox="1790 33 130 29">
  <circle cx="1805" cy="47" r="8" fill="#5a5a5a"/>
  <path d="M1800.500 52 L1805 47.500 M1807.500 43 a3.200 3.200 0 1 0 2 4.200" stroke="#c6c6c6" stroke-width="2" fill="none" stroke-linecap="round"/>
  <circle cx="1838" cy="47" r="8" fill="#5a5a5a"/>
  <circle cx="1838" cy="47" r="6" fill="none" stroke="#c6c6c6" stroke-width="1.300"/>
  <path d="M1838 42.500 V47.500 H1842" stroke="#c6c6c6" stroke-width="1.500" fill="none"/>
  <circle cx="1871" cy="47" r="8" fill="#5a5a5a"/>
  <text x="1871" y="52" font-family="Liberation Sans, sans-serif" font-weight="bold" font-size="13" fill="#c6c6c6" text-anchor="middle">?</text>
  <circle cx="1909" cy="47" r="10.500" fill="#f1f1f1"/>
  <text x="1908" y="51" font-family="Liberation Sans, sans-serif" font-size="10" fill="#444" text-anchor="middle">JP</text>
</svg>

</div>

<!-- ============ TOOLBAR ============ -->
<div id="toolbar" class="abs">
<div id="designbtn" class="abs">DESIGN <span style="display:inline-block;border-left:3.500px solid transparent;border-right:3.500px solid transparent;border-top:4px solid #222;vertical-align:2px;margin-left:2px"></span></div>
<div class="abs tab on" style="left:158px">SOLID</div>
<div class="abs tab" style="left:244px">SURFACE</div>
<div class="abs tab" style="left:347px">SHEET METAL</div>
<div class="abs tab" style="left:444px">TOOLS</div>
<div id="tabline" class="abs"></div>
<div class="abs glabel" style="left:252px">CREATE</div>
<div class="abs glabel" style="left:520px">MODIFY</div>
<div class="abs glabel" style="left:704px">ASSEMBLE</div>
<div class="abs glabel" style="left:803px">CONSTRUCT</div>
<div class="abs glabel" style="left:891px">INSPECT</div>
<div class="abs glabel" style="left:967px">INSERT</div>
<div class="abs glabel" style="left:1038px">SELECT</div>
<div class="abs sep" style="left:387px"></div>
<div class="abs sep" style="left:656px"></div>
<div class="abs sep" style="left:753px"></div>
<div class="abs sep" style="left:852px"></div>
<div class="abs sep" style="left:931px"></div>
<div class="abs sep" style="left:1000px"></div>
<svg class="abs" style="left:0;top:0" width="1916" height="82" viewBox="2 62 1916 82">
<!-- CREATE: sketch -->
<g>
  <rect x="134" y="92" width="26.500" height="26.500" fill="none" stroke="#444" stroke-width="1" stroke-dasharray="6 3"/>
  <rect x="132.500" y="90.500" width="3" height="3" fill="#444"/><rect x="159" y="90.500" width="3" height="3" fill="#444"/><rect x="132.500" y="117" width="3" height="3" fill="#444"/>
  <path d="M140.500 98.500 H154 M140.500 98.500 V111.500" stroke="#444" stroke-width="1" stroke-dasharray="5 2" fill="none"/>
  <path d="M140.500 111.500 C149 111 153.500 106 154 98.500" stroke="#444" stroke-width="1" fill="none"/>
  <rect x="139" y="97" width="3" height="3" fill="#444"/><rect x="152.500" y="97" width="3" height="3" fill="#444"/><rect x="139" y="110" width="3" height="3" fill="#444"/>
  <path d="M150.500 114.300 H163.500 M157 108 V121" stroke="#27a349" stroke-width="3.600"/>
</g>
<!-- extrude -->
<g>
  <path d="M176 96 L181 90.500 H200 L195 96 Z" fill="#7db8ea"/>
  <path d="M195 96 L200 90.500 V112.500 L195 118 Z" fill="#4d95d3"/>
  <rect x="176" y="96" width="19" height="22" fill="#63a9e4"/>
  <path d="M176 118 H195 L200 112.500 V116 L195 121.500 H176 Z" fill="#bdbdbd"/>
  <path d="M204 116 V93 M201 97 L204 92 L207 97 Z" stroke="#222" stroke-width="1.200" fill="#222"/>
</g>
<!-- revolve -->
<g>
  <path d="M222 95 C228 90.500 242 90.500 248 97" stroke="#333" stroke-width="1.100" fill="none"/>
  <path d="M219 97.500 L225 92 L224.500 97 Z" fill="#222"/>
  <path d="M218.500 105 C226 96 242 96 250 104.500 L244.500 112 C238 107 230 107 223.500 112 Z" fill="#7db8ea"/>
  <path d="M218.500 105 L223.500 112 V119 L219.500 114 Z" fill="#4d95d3"/>
  <path d="M223.500 112 C230 107 238 107 244.500 112 V118.500 C238 114 230 114 223.500 119 Z" fill="#63a9e4"/>
  <path d="M244.500 112 L250 104.500 V111.500 L244.500 118.500 Z" fill="#fff" stroke="#444" stroke-width="1"/>
</g>
<!-- hole -->
<g>
  <path d="M261.500 96.500 L268 90.500 H292.500 L286 96.500 Z" fill="#ededed" stroke="#6a6a6a" stroke-width="1"/>
  <path d="M286 96.500 L292.500 90.500 V115 L286 121.500 Z" fill="#c9c9c9" stroke="#6a6a6a" stroke-width="1"/>
  <rect x="261.500" y="96.500" width="24.500" height="25" fill="#dcdcdc" stroke="#6a6a6a" stroke-width="1"/>
  <circle cx="273" cy="110" r="8.500" fill="#ececec" stroke="#6a6a6a" stroke-width="1"/>
  <circle cx="273" cy="110" r="7" fill="#5ea6e2"/>
  <path d="M272 103.500 A7 7 0 0 1 280 111 C276 110 273 107.500 272 103.500 Z" fill="#eef4fa"/>
</g>
<!-- pattern -->
<g>
  <path d="M307.500 98 V113 M311 95.500 H325 M311 116.500 H325" stroke="#555" stroke-width="1"/>
  <rect x="304.500" y="92.500" width="6" height="6" fill="#fff" stroke="#555" stroke-width="1"/>
  <rect x="325" y="92" width="7" height="7" fill="#5ea6e2"/><rect x="304" y="113" width="7" height="7" fill="#5ea6e2"/><rect x="325" y="113" width="7" height="7" fill="#5ea6e2"/>
</g>
<!-- form -->
<g>
  <path d="M347.500 100 C347.500 95 351 92.500 356 92.500 H367 C372 92.500 376.500 96 376.500 101 V113 C376.500 118 372 121.500 367 121.500 H356 C351 121.500 347.500 118 347.500 113 Z" fill="#b98ae6"/>
  <path d="M349 101 C349 97 352 95 356 95 H365 C369 95 370 97 370 101 V113 C370 117 368 119 364 119 H356 C352 119 349 117 349 113 Z" fill="#c9a2ee"/>
  <path d="M370 100 L376 97 V114 L370 118 Z" fill="#9a63d6"/>
  <path d="M359.500 95 V119 M349 107 H370" stroke="#9a63d6" stroke-width="1"/>
  <path d="M347.500 100 C347.500 95 351 92.500 356 92.500 H367 C372 92.500 376.500 96 376.500 101 V113 C376.500 118 372 121.500 367 121.500 H356 C351 121.500 347.500 118 347.500 113 Z" fill="none" stroke="#9467cf" stroke-width="0.800"/>
  <path d="M370 89 l1.800 4.700 4.600-2.100-2.100 4.600 4.700 1.800-4.700 1.800 2.100 4.600-4.600-2.100-1.800 4.700-1.800-4.700-4.600 2.100 2.100-4.600-4.700-1.800 4.700-1.800-2.100-4.600 4.600 2.100z" fill="#f5a31a"/>
</g>
<!-- MODIFY: press pull -->
<g>
  <path d="M402.500 97 L408 90.500 H413 V121.500 H402.500 Z" fill="#dadada" stroke="#6a6a6a" stroke-width="1"/>
  <path d="M409.500 97 L414.500 90.500 H424 L419 97 Z" fill="#7db8ea"/>
  <path d="M419 97 L424 90.500 V115.500 L419 121.500 Z" fill="#4d95d3"/>
  <rect x="409.500" y="97" width="9.500" height="24.500" fill="#63a9e4"/>
  <path d="M421 105.500 H428 M427 103 L431 105.500 L427 108 Z" stroke="#222" stroke-width="1.200" fill="#222"/>
</g>
<!-- fillet -->
<g>
  <path d="M444.500 100 L453 90.500 H463 C470 92 475 98 475.500 105 V113 L467 121.500 H444.500 Z" fill="#d9d9d9" stroke="#6a6a6a" stroke-width="1"/>
  <path d="M467 110 L475.500 105 V113 L467 121.500 Z" fill="#bdbdbd" stroke="#6a6a6a" stroke-width="1"/>
  <path d="M456 96 L463 90.500 C470 92 475 98 475.500 105 L469.500 110 C469 103 464 97.500 456 96 Z" fill="#5ea6e2"/>
</g>
<!-- shell -->
<g>
  <path d="M487.500 97 L494 90.500 H518.500 L512 97 Z" fill="#ededed" stroke="#6a6a6a" stroke-width="1"/>
  <path d="M512 97 L518.500 90.500 V115 L512 121.500 Z" fill="#c9c9c9" stroke="#6a6a6a" stroke-width="1"/>
  <rect x="487.500" y="97" width="24.500" height="24.500" fill="#dcdcdc" stroke="#6a6a6a" stroke-width="1"/>
  <rect x="491" y="101" width="17" height="17" fill="#f4f4f4"/>
  <path d="M491 101 H498 V111 H508 V118 H491 Z" fill="#4d95d3"/>
  <path d="M491 118 L498 111 H508 V118 Z" fill="#7db8ea"/>
</g>
<!-- combine -->
<g>
  <path d="M540 96 L545.500 90.500 H562 L556.500 96 Z" fill="#7db8ea"/>
  <path d="M556.500 96 L562 90.500 V107 L556.500 112.500 Z" fill="#4d95d3"/>
  <rect x="540" y="96" width="16.500" height="16.500" fill="#63a9e4"/>
  <path d="M530.500 106 L536 100.500 H552 L546.500 106 Z" fill="#7db8ea"/>
  <path d="M546.500 106 L552 100.500 V116 L546.500 121.500 Z" fill="#4d95d3"/>
  <rect x="530.500" y="106" width="16" height="15.500" fill="#63a9e4"/>
</g>
<!-- split -->
<g>
  <path d="M575 95.500 L581 90.500 H603 L597 95.500 Z" fill="#7db8ea"/>
  <path d="M597 95.500 L603 90.500 V101 L597 106 Z" fill="#4d95d3"/>
  <rect x="575" y="95.500" width="22" height="10.500" fill="#63a9e4"/>
  <path d="M575.500 109.500 H597 L603 104.500 V115 L597 120.500 H575.500 Z" fill="#dcdcdc" stroke="#6a6a6a" stroke-width="1"/>
  <path d="M597 109.500 L603 104.500 V115 L597 120.500 Z" fill="#bdbdbd"/>
  <path d="M573 108 H597 L605 101" stroke="#3d8fd3" stroke-width="1.300" fill="none"/>
  <path d="M573 109.300 H597.500 L605 102.500" stroke="#bfe3f7" stroke-width="1" fill="none"/>
</g>
<!-- move -->
<g fill="#2b2b2b">
  <path d="M631 95 h2.400 v22 h-2.400z M621 104.800 h22 v2.400 h-22z"/>
  <path d="M632.200 90.500 L637 97.500 H627.400 Z M632.200 121.500 L637 114.500 H627.400 Z M616.500 106 L623.500 101.200 V110.800 Z M647.700 106 L640.700 101.200 V110.800 Z"/>
</g>
<!-- ASSEMBLE: new component -->
<g>
  <path d="M670.500 99 L675 94.500 H686 L682 99 Z" fill="#7db8ea"/>
  <path d="M682 99 L686 94.500 V104 L682 108.500 Z" fill="#4d95d3"/>
  <rect x="670.500" y="99" width="11.500" height="10" fill="#63a9e4"/>
  <rect x="670.500" y="109.500" width="12" height="11.500" fill="#dcdcdc" stroke="#8a8a8a" stroke-width="1"/>
  <path d="M683.500 109.500 L688 105.500 H697.500 L694 109.500 Z" fill="#ededed" stroke="#8a8a8a" stroke-width="0.800"/>
  <path d="M694 109.500 L697.500 105.500 V117 L694 121 Z" fill="#c4c4c4" stroke="#8a8a8a" stroke-width="0.800"/>
  <rect x="683.500" y="109.500" width="10.500" height="11.500" fill="#dcdcdc" stroke="#8a8a8a" stroke-width="1"/>
  <path d="M693.500 90.500 l1.600 4.200 4.100-1.900-1.900 4.100 4.200 1.600-4.200 1.600 1.900 4.100-4.100-1.900-1.600 4.200-1.600-4.200-4.100 1.900 1.900-4.100-4.200-1.600 4.200-1.600-1.900-4.100 4.100 1.900z" fill="#f5a31a"/>
</g>
<!-- joint -->
<g>
  <path d="M715.500 101 C717 96 720 93 723.500 92.500 H727.500 V103 L723 106 V113 L716.500 119 Z" fill="#d4d4d4" stroke="#777" stroke-width="1"/>
  <path d="M723.500 92.500 C721.500 94 721.500 102 723 104.500 L727.500 103 V92.500 Z" fill="#ebebeb" stroke="#777" stroke-width="0.800"/>
  <path d="M736 95.500 L743 101.500 V119.500 L736 113.500 Z" fill="#c4c4c4" stroke="#777" stroke-width="1"/>
  <path d="M730.500 104.500 L736 102 V113.500 L730.500 111.500 Z" fill="#dedede" stroke="#777" stroke-width="0.800"/>
  <path d="M725 106.500 V110.500 M733.500 99 V103 M731.500 101 H735.500" stroke="#2d8fd3" stroke-width="1"/>
</g>
<!-- CONSTRUCT -->
<g>
  <path d="M790.500 100 L798 91 H806 L798.500 100 Z" fill="#ededed" stroke="#6a6a6a" stroke-width="0.800"/>
  <rect x="790.500" y="100" width="8" height="20.500" fill="#dcdcdc" stroke="#6a6a6a" stroke-width="0.800"/>
  <path d="M798.500 100 L807.500 90.500 V111 L798.500 120.500 Z" fill="#44b56c"/>
  <path d="M811 100 L819.500 91 V110.500 L811 120 Z" fill="#e8925a"/>
</g>
<!-- INSPECT -->
<g>
  <path d="M880.500 98 V106 M907.500 98 V106 M882 102 H906" stroke="#555" stroke-width="1"/>
  <path d="M881 102 L885.500 99.800 V104.200 Z M907 102 L902.500 99.800 V104.200 Z" fill="#555"/>
  <rect x="880" y="108" width="28" height="6" fill="#f5a31a"/>
  <path d="M883.500 108 v2 M887 108 v2 M890.500 108 v2 M894 108 v2 M897.500 108 v2 M901 108 v2 M904.500 108 v2" stroke="#b86d00" stroke-width="0.800"/>
</g>
<!-- INSERT -->
<g>
  <rect x="953" y="91" width="29" height="29" fill="#6cb4ee"/>
  <path d="M953 109 C957 103 960 102 963 104.500 C966 107 968 112 971 113 C973 113 975 108 978 109 C980 109.500 981 112 982 114 V120 H953 Z" fill="#3c8ccf"/>
  <circle cx="974.500" cy="99" r="3" fill="#fdf8d8"/>
</g>
<!-- SELECT -->
<g>
  <rect x="1024.500" y="90.500" width="27" height="21" fill="none" stroke="#2faa55" stroke-width="1" stroke-dasharray="3.500 2.200"/>
  <path d="M1045.500 105 V118.500 L1048.800 115.500 L1051 121 L1053.300 120 L1051 114.800 L1055.500 114.800 Z" fill="#fff" stroke="#222" stroke-width="1"/>
</g>
</svg>

</div>

<div class="abs" style="left:2px;top:62px;width:196px;height:0.8px;background:#c9c9c9"></div><div class="abs" style="left:1753px;top:62px;width:166px;height:0.8px;background:#c9c9c9"></div>
<!-- ============ BROWSER ============ -->
<div id="browserHead" class="abs">
  <svg class="abs" style="left:4px;top:6px" width="12" height="10" viewBox="0 0 12 10"><path d="M5 1 V8 L0.500 4.500 Z M10.500 1 V8 L6 4.500 Z" fill="#333"/></svg>
  <div class="abs ptitle" style="font-size:10px;top:5px">BROWSER</div>
  <svg class="abs" style="left:276px;top:5px" width="22" height="12" viewBox="0 0 22 12"><circle cx="5.500" cy="5.500" r="4.500" fill="#222"/><rect x="3" y="4.800" width="5" height="1.500" fill="#f1f1f1"/><path d="M17.500 1 V10" stroke="#555" stroke-width="1"/><path d="M19.500 1 V10" stroke="#bbb" stroke-width="1"/></svg>
</div>
<svg width="0" height="0" style="position:absolute">
  <defs>
    <g id="eye"><path d="M-1 5 C2.500 -0.200 11.500 -0.200 15 5 C11.500 10.200 2.500 10.200 -1 5 Z" fill="#8a8a8a"/><circle cx="7" cy="5" r="3.400" fill="#f3f3f3"/><circle cx="7" cy="5" r="2" fill="#8a8a8a"/></g>
    <g id="eyeoff"><path d="M0 5 C3 0.500 11 0.500 14 5 C11 9.500 3 9.500 0 5 Z" fill="#dcdcdc"/><circle cx="7" cy="5" r="2.800" fill="#f3f3f3"/><path d="M2.500 0.500 L11.500 10" stroke="#e6e6e6" stroke-width="1.300"/></g>
    <g id="folder"><path d="M0 2 H6 L7 3.500 H16 V14 H0 Z" fill="#8a8a8a"/><path d="M0 0.500 H6.500 V2 H0 Z" fill="#9a9a9a"/></g>
    <g id="tri"><path d="M1.500 1.300 L9.300 7.500 L1.500 13.700 Z" fill="#fff" stroke="#333" stroke-width="1.200" stroke-linejoin="miter"/></g>
    <g id="trid"><path d="M10 0.500 V10.500 H0 Z" fill="#8f8f8f" stroke="#333" stroke-width="1"/></g>
    <g id="plane"><rect x="3.500" y="0.500" width="11" height="11" fill="#fff" stroke="#555" stroke-width="1"/><rect x="0" y="4" width="11" height="11.500" fill="#e58a52"/><rect x="3.500" y="4" width="7.500" height="8" fill="#eeb08a"/></g>
  </defs>
</svg>
<!-- row1 -->
<div class="abs row" style="left:41px;top:180px;width:184px"></div>
<div class="abs" style="left:66px;top:181px;width:134px;height:16px;background:#7c7c7c"></div>
<div class="abs rtxt" style="left:99px;top:182px;color:#fff;font-weight:bold;font-size:11px;letter-spacing:0.1px">Gear Housing v2</div>
<svg class="abs" style="left:20px;top:180px" width="200" height="20" viewBox="20 180 200 20">
  <use href="#trid" x="22" y="183.500"/>
  <use href="#eye" x="45" y="184"/>
  <path d="M69.500 185.500 L72 183 H83.500 V192 L81 195 H69.500 Z" fill="#f0f0f0" stroke="#444" stroke-width="1"/>
  <path d="M69.500 185.500 H81 V195 M81 185.500 L83.500 183" fill="none" stroke="#444" stroke-width="0.800"/>
  <circle cx="210.500" cy="189" r="5.500" fill="#fff" stroke="#222" stroke-width="1.100"/><circle cx="210.500" cy="189" r="2.300" fill="#222"/>
</svg>
<!-- rows -->
<div class="abs row" style="left:59px;top:204px;width:133px"></div>
<div class="abs row" style="left:59px;top:228px;width:109px"></div>
<div class="abs row" style="left:59px;top:252px;width:94px"></div>
<div class="abs row" style="left:59px;top:276px;width:102px"></div>
<div class="abs row" style="left:59px;top:300px;width:114px"></div>
<div class="abs row" style="left:59px;top:324px;width:130px"></div>
<div class="abs row" style="left:77px;top:348px;width:99px"></div>
<div class="abs row" style="left:77px;top:372px;width:99px"></div>
<div class="abs row" style="left:77px;top:396px;width:99px"></div>
<div class="abs rtxt" style="left:92px;top:206px;letter-spacing:-0.15px">Document Settings</div>
<div class="abs rtxt" style="left:92px;top:230px;letter-spacing:-0.15px">Named Views</div>
<div class="abs rtxt" style="left:117px;top:254px">Origin</div>
<div class="abs rtxt" style="left:117px;top:278px">Bodies</div>
<div class="abs rtxt" style="left:117px;top:302px">Sketches</div>
<div class="abs rtxt" style="left:117px;top:326px">Construction</div>
<div class="abs rtxt" style="left:135px;top:350px">Plane2</div>
<div class="abs rtxt" style="left:135px;top:374px">Plane3</div>
<div class="abs rtxt" style="left:135px;top:398px">Plane4</div>
<svg class="abs" style="left:30px;top:200px" width="180" height="220" viewBox="30 200 180 220">
  <use href="#tri" x="40" y="205.500"/><use href="#tri" x="40" y="229.500"/><use href="#tri" x="40" y="253.500"/><use href="#tri" x="40" y="277.500"/><use href="#tri" x="40" y="301.500"/>
  <use href="#trid" x="40" y="327.500"/>
  <!-- gear icon -->
  <g transform="translate(70 213)" fill="#8a8a8a">
    <circle r="5.800"/>
    <g><rect x="-1.700" y="-8" width="3.400" height="16"/><rect x="-1.700" y="-8" width="3.400" height="16" transform="rotate(45)"/><rect x="-1.700" y="-8" width="3.400" height="16" transform="rotate(90)"/><rect x="-1.700" y="-8" width="3.400" height="16" transform="rotate(135)"/></g>
    <circle r="2.600" fill="#f3f3f3"/>
  </g>
  <use href="#folder" x="62" y="230"/>
  <use href="#eyeoff" x="63" y="256"/><use href="#folder" x="87" y="254"/>
  <use href="#eye" x="63" y="280"/><use href="#folder" x="87" y="278"/>
  <path d="M84 293.500 H160" stroke="#5d7fb8" stroke-width="1.600" stroke-dasharray="2.500 2.500"/>
  <use href="#eye" x="63" y="304"/><use href="#folder" x="87" y="302"/>
  <use href="#eye" x="63" y="328"/><use href="#folder" x="87" y="326"/>
  <use href="#eyeoff" x="81" y="352"/><use href="#plane" x="105" y="349.500"/>
  <use href="#eyeoff" x="81" y="376"/><use href="#plane" x="105" y="373.500"/>
  <use href="#eyeoff" x="81" y="400"/><use href="#plane" x="105" y="397.500"/>
</svg>
<!-- comments -->
<div id="commentsHead" class="abs">
  <div class="abs ptitle" style="left:24px;font-size:10px;top:5px">COMMENTS</div>
  <svg class="abs" style="left:277px;top:5px" width="22" height="12" viewBox="0 0 22 12"><circle cx="5.500" cy="5.500" r="4.500" fill="#222"/><path d="M3 5.500 H8 M5.500 3 V8" stroke="#f1f1f1" stroke-width="1.400"/><path d="M17.500 1 V10" stroke="#555" stroke-width="1"/><path d="M19.500 1 V10" stroke="#bbb" stroke-width="1"/></svg>
</div>


<!-- ============ VIEWCUBE / DIALOG ============ -->
<svg class="abs" style="left:1800px;top:145px" width="120" height="125" viewBox="1800 145 120 125">
  <defs>
    <linearGradient id="vcR" x1="0" y1="0" x2="1" y2="1"><stop offset="0" stop-color="#dedfe3"/><stop offset="1" stop-color="#c5c6cb"/></linearGradient>
    <linearGradient id="vcB" x1="0" y1="0" x2="1" y2="0"><stop offset="0" stop-color="#d9dade"/><stop offset="1" stop-color="#bfc0c5"/></linearGradient>
  </defs>
  <!-- home -->
  <path d="M1815.500 162.500 L1824.500 153.500 L1833.500 162.500 M1818 161 V170.500 H1831 V161" fill="#fff" stroke="#8a8a8a" stroke-width="1.200"/>
  <rect x="1823" y="164" width="3" height="6.500" fill="#8a8a8a"/>
  <!-- shadow -->
  <path d="M1871 250 L1902 228 L1916 240 L1885 262 Z" fill="#e6e6e6" opacity=".6"/>
  <!-- cube -->
  <path d="M1869.200 173.300 L1904.500 188.300 L1869.600 207.600 L1834.300 188.900 Z" fill="#e3e4e7" stroke="#8f9095" stroke-width="0.700"/>
  <path d="M1834.300 188.900 L1869.600 207.600 L1869.800 248.500 L1837.300 228 Z" fill="url(#vcR)" stroke="#8f9095" stroke-width="0.700"/>
  <path d="M1869.600 207.600 L1904.500 188.300 L1900.900 226.800 L1869.800 248.500 Z" fill="url(#vcB)" stroke="#8f9095" stroke-width="0.700"/>
  <path d="M1840.300 199.800 L1862.600 212.400 L1862.600 237 L1842.100 223.200 Z" fill="#9cc7ee" stroke="#2f86d6" stroke-width="1"/>
  <text transform="translate(1871 185.500) rotate(164) skewX(-30) scale(1 .62)" font-family="Liberation Sans, sans-serif" font-weight="bold" font-size="11" fill="#4a4b50" text-anchor="middle">TOP</text>
  <text transform="translate(1887 223) rotate(-30) skewX(-14)" font-family="Liberation Sans, sans-serif" font-weight="bold" font-size="8.500" fill="#4a4b50" text-anchor="middle">BACK</text>
  <text transform="translate(1851 221) rotate(31) skewX(14)" font-family="Liberation Sans, sans-serif" font-weight="bold" font-size="9.500" fill="#44566e" text-anchor="middle">RIGHT</text>
  <!-- axes -->
  <text x="1869.500" y="163.500" font-family="Liberation Sans, sans-serif" font-weight="bold" font-size="13" fill="#2b2bd0" text-anchor="middle">Z</text>
  <path d="M1869.800 165.500 V173" stroke="#1a1ab8" stroke-width="2"/>
  <text x="1826.500" y="238.500" font-family="Liberation Sans, sans-serif" font-weight="bold" font-size="13" fill="#e02222" text-anchor="middle">X</text>
  <path d="M1833 230.500 L1838 227.500" stroke="#e02222" stroke-width="2"/>
  <text x="1912.500" y="238" font-family="Liberation Sans, sans-serif" font-weight="bold" font-size="13" fill="#3ad24a" text-anchor="middle">Y</text>
  <path d="M1901 226.800 L1908 230.500" stroke="#3ad24a" stroke-width="2"/>
  <!-- pin -->
  <circle cx="1871.600" cy="238" r="3.300" fill="#fff" stroke="#222" stroke-width="0.900"/><path d="M1869.500 237.500 H1873.700 L1871.600 240.800 Z" fill="#222"/>
  <!-- cursor -->
  <path d="M1854.800 216.600 V233.800 L1858.500 230.300 L1861.300 236.800 L1864.200 235.500 L1861.400 229.200 L1866.500 229 Z" fill="#fff" stroke="#111" stroke-width="1"/>
  <rect x="1909" y="248" width="11" height="6" fill="#e4e4e4" stroke="#bdbdbd" stroke-width="0.800"/>
</svg>
<div id="tooltip" class="abs">Select two</div>
<div id="dlg" class="abs">
  <div id="dlgHead" class="abs">
    <svg class="abs" style="left:1px;top:6px" width="22" height="13" viewBox="0 0 22 13"><path d="M1.500 1 V11" stroke="#555" stroke-width="1"/><path d="M3.500 1 V11" stroke="#bbb" stroke-width="1"/><circle cx="15" cy="6" r="4.500" fill="#222"/><rect x="12.500" y="5.300" width="5" height="1.500" fill="#f1f1f1"/></svg>
    <div class="abs" style="left:24px;top:6.500px;font-size:10.500px;color:#5a5a5a;letter-spacing:-0.45px">MIDPLANE</div>
    <svg class="abs" style="left:228px;top:7px" width="10" height="10" viewBox="0 0 10 10"><path d="M5.500 1.500 L9.500 5 L5.500 8.500 Z M9 1.500 h1.200 v7 h-1.200z" fill="#222"/></svg>
  </div>
  <div class="abs" style="left:12px;top:33.500px;font-size:10.500px;color:#333;letter-spacing:-0.1px">Planes</div>
  <div id="selbtn" class="abs"><svg class="abs" style="left:7px;top:6px" width="12" height="17" viewBox="0 0 12 17"><path d="M1.500 1 V13 L4.300 10.500 L6.300 15 L8.200 14.200 L6.200 9.800 L10 9.600 Z" fill="#fff" stroke="#333" stroke-width="0.900"/></svg><span style="position:absolute;left:22px;top:0">2 selected</span></div>
  <svg class="abs" style="left:152px;top:34px" width="12" height="12" viewBox="0 0 12 12"><path d="M2 2 L10 10 M10 2 L2 10" stroke="#333" stroke-width="1.800"/></svg>
  <div id="dlgSep" class="abs"></div>
  <div class="abs btn" style="left:107px">OK</div>
  <div class="abs btn" style="left:177px">Cancel</div>
</div>


<!-- ============ BOTTOM ============ -->
<div id="navbar" class="abs">
<svg class="abs" style="left:0;top:0" width="253" height="24" viewBox="840 1008 253 24">
  <g fill="none" stroke="#333" stroke-width="1">
    <!-- orbit -->
    <ellipse cx="851" cy="1019.500" rx="4" ry="7.500"/>
    <path d="M847 1016.500 C843 1017.500 843 1021.500 847 1022.500 M855 1016.500 C859 1017.500 859 1021.500 855 1022.500"/>
    <!-- look at -->
    <path d="M877.500 1016.500 H891.500 V1026.500 H877.500 Z M880.500 1020 H888.500 V1024 H880.500 Z M878 1016.500 L881 1012.500 L883 1015 L886.500 1011.500 L888.500 1014.500"/>
    <!-- pan hand -->
    <path d="M905 1021 L903 1017.500 C902.500 1016 904.500 1015.500 905.500 1017 L906.500 1018.500 V1013 C906.500 1011.500 908.300 1011.500 908.300 1013 V1017 V1011.800 C908.300 1010.500 910.200 1010.500 910.200 1011.800 V1017 V1012.500 C910.200 1011.200 912 1011.200 912 1012.500 V1017.500 V1014 C912 1013 913.800 1013 913.800 1014 V1021 C913.800 1024 912.500 1025 912 1027 H907 C906.500 1025 906 1023 905 1021 Z"/>
    <!-- zoom -->
    <circle cx="934" cy="1018" r="4.300"/><path d="M937 1021 L941.500 1025.500" stroke-width="2.200"/><path d="M939 1014 H943 M941 1012 V1016 M939 1017.500 H943" stroke-width="0.900"/>
    <!-- zoom window -->
    <circle cx="961" cy="1018.500" r="5.300"/><path d="M965 1022.500 L969.500 1027" stroke-width="2.400"/><rect x="954.500" y="1012" width="14" height="14" stroke-dasharray="2 1.500" stroke-width="0.800"/>
    <!-- display -->
    <rect x="996.500" y="1012.500" width="13" height="10" fill="#dfe7f5"/><rect x="998.500" y="1014.500" width="9" height="6" fill="#7f9fd6" stroke="none"/><path d="M1003 1022.500 V1025.500 M999.500 1026 H1006.500" stroke-width="1.400"/>
    <!-- grid -->
    <rect x="1027" y="1012.500" width="14" height="14" fill="#d8d8d8" stroke="#444"/><path d="M1030.500 1012.500 V1026.500 M1034 1012.500 V1026.500 M1037.500 1012.500 V1026.500 M1027 1016 H1041 M1027 1019.500 H1041 M1027 1023 H1041" stroke="#444" stroke-width="0.800"/>
    <!-- viewports -->
    <rect x="1058.500" y="1013.500" width="6" height="5" fill="#9fb7e6" stroke="#2f4f8f"/><rect x="1066.500" y="1013.500" width="6" height="5" fill="#9fb7e6" stroke="#2f4f8f"/><rect x="1058.500" y="1020.500" width="6" height="5" fill="#9fb7e6" stroke="#2f4f8f"/><rect x="1066.500" y="1020.500" width="6" height="5" fill="#9fb7e6" stroke="#2f4f8f"/>
  </g>
  <circle cx="850" cy="1018" r="0.900" fill="#2d8fd3"/><circle cx="852.500" cy="1021" r="0.900" fill="#2d8fd3"/>
  <g fill="#222">
    <path d="M864 1018 h6 l-3 3.800z M975 1018 h6 l-3 3.800z M1013.500 1018 h6 l-3 3.800z M1044.500 1018 h6 l-3 3.800z M1075 1018 h6 l-3 3.800z"/>
  </g>
</svg>
</div>
<div id="status" class="abs" style="text-align:right">2 Faces | Min Distance : 17.00 mm</div>
<div id="timeline" class="abs">
<svg class="abs" style="left:0;top:-2px" width="1916" height="44" viewBox="2 1036 1916 44">
  <g fill="#1e1e1e">
    <path d="M12.500 1055.500 h1.800 v12 h-1.800z M23 1055.500 V1067.500 L14.800 1061.500 Z"/>
    <path d="M46 1056 V1067 L36.500 1061.500 Z M47 1059 h1.800 v5 h-1.800z"/>
    <path d="M62 1054.500 V1068.500 L73.500 1061.500 Z"/>
    <path d="M88 1056 V1067 L97.500 1061.500 Z M85.500 1059 h1.800 v5 h-1.800z"/>
    <path d="M112 1055.500 V1067.500 L120.200 1061.500 Z M121 1055.500 h1.800 v12 h-1.800z"/>
  </g>
  <path d="M147.500 1048.500 L151.500 1045 M152.500 1048.500 L156.500 1045 M157.500 1048.500 L161.500 1045" stroke="#222" stroke-width="1.800"/>
  
  <g stroke="#cfcfcf" stroke-width="1"><path d="M156 1072 V1079 M179 1072 V1079 M203 1072 V1079 M227 1072 V1079 M251 1072 V1079 M275 1072 V1079 M299 1072 V1079 M323 1072 V1079 M347 1072 V1079 M371 1072 V1079 M395 1072 V1079 M419 1072 V1079 M156 1077.500 H420"/></g>
  <!-- timeline features -->
  <g>
    <path d="M148.500 1058 L152 1054.500 H159 L162.500 1058 V1067.500 H148.500 Z" fill="#d6d6da" stroke="#555" stroke-width="1"/><path d="M148.500 1058 H159 V1067.500" fill="none" stroke="#555" stroke-width="0.800"/>
    <path d="M172.500 1060 C173 1056.500 175.500 1054.500 178.500 1054.500 H186 V1067.500 H172.500 Z" fill="#d9d9d9" stroke="#666" stroke-width="0.900"/><path d="M176 1057 L181.500 1053.500 L184.500 1058.500 L179 1062 Z" fill="#4d95d3"/>
    <path d="M196.500 1058 L200 1054.500 V1064 L196.500 1067.500 Z" fill="#dcdcdc" stroke="#666" stroke-width="0.800"/><path d="M200.500 1058 L204.500 1054 V1064 L200.500 1068 Z" fill="#44b56c"/><path d="M206 1058 L210 1054 V1064 L206 1068 Z" fill="#e8925a"/>
  </g>
  <g id="tlsk">
    <rect x="220.500" y="1055.500" width="12" height="11.500" fill="#f6f6f6" stroke="#2d7fc6" stroke-width="1" stroke-dasharray="3 2"/>
    <rect x="219" y="1054" width="2.500" height="2.500" fill="#2d7fc6"/><rect x="231" y="1054" width="2.500" height="2.500" fill="#2d7fc6"/><rect x="219" y="1065.500" width="2.500" height="2.500" fill="#2d7fc6"/>
    <path d="M228 1066.500 L234 1060.500 L236 1062.500 L230 1068.500 Z" fill="#f0b43c"/><path d="M228 1066.500 L227.500 1069 L230 1068.500 Z" fill="#e24a4a"/>
  </g>
  <use href="#tlsk" x="96"/><use href="#tlsk" x="168"/>
  <g id="tlex">
    <path d="M244 1057.500 L247 1054.500 H258 L255 1057.500 Z" fill="#7db8ea"/><path d="M255 1057.500 L258 1054.500 V1063.500 L255 1066.500 Z" fill="#4d95d3"/><rect x="244" y="1057.500" width="11" height="9" fill="#63a9e4"/><path d="M244 1066.500 H255 L258 1063.500 V1065.500 L255 1068.500 H244 Z" fill="#bdbdbd"/>
    <path d="M260.500 1067 V1056 M259 1058 L260.500 1055 L262 1058 Z" stroke="#222" stroke-width="0.900" fill="#222"/>
  </g>
  <use href="#tlex" x="96"/><use href="#tlex" x="168"/>
  <g>
    <path d="M268.500 1053.500 L274 1059 M274 1053.500 L268.500 1059" stroke="#c8232c" stroke-width="2"/>
    <rect x="273.500" y="1061.500" width="7" height="6.500" fill="#eef4fb" stroke="#2d6fb6" stroke-width="0.900"/><path d="M273.500 1061.500 L276 1059 H283 V1065.500 L280.500 1068 M280.500 1061.500 L283 1059" fill="none" stroke="#2d6fb6" stroke-width="0.900"/>
  </g>
  <g>
    <path d="M292 1062 L296 1058 V1068 H292 Z" fill="#dcdcdc" stroke="#666" stroke-width="0.800"/>
    <path d="M293 1061 L300.500 1053.500 L306 1059 L298.500 1066.500 Z" fill="#e8925a"/><path d="M297 1060.500 L300.500 1057 L302.500 1059 L299 1062.500 Z" fill="#6fbf73"/>
  </g>
  <g>
    <path d="M366 1064 C364 1058 370 1055 376 1054.500 L378 1064 L372 1068.500 Z" fill="#e8925a" opacity=".85"/>
    <path d="M364.500 1066 C364.500 1060 370 1056.500 374 1056" fill="none" stroke="#2faa55" stroke-width="2"/>
    <circle cx="366.500" cy="1066" r="2" fill="#fff" stroke="#2faa55" stroke-width="1"/>
  </g>
  <!-- marker -->
  <path d="M425.500 1048 H436.500 V1052 L431.800 1056 V1078 H430.200 V1056 L425.500 1052 Z" fill="#5f5f5f"/>
  <!-- settings gear -->
  <g transform="translate(1911 1062)" fill="#8a8a8a">
    <circle r="5.300"/>
    <rect x="-1.600" y="-7.500" width="3.200" height="15"/><rect x="-1.600" y="-7.500" width="3.200" height="15" transform="rotate(45)"/><rect x="-1.600" y="-7.500" width="3.200" height="15" transform="rotate(90)"/><rect x="-1.600" y="-7.500" width="3.200" height="15" transform="rotate(135)"/>
    <circle r="2.300" fill="#f1f1f1"/>
  </g>
</svg>
</div>


<div id="frameTop" class="abs"></div>
<div id="frameLeft" class="abs"></div>
<div id="frameRight" class="abs"></div>
<div id="frameBottom" class="abs"></div>
</div>
</body>
</html>
